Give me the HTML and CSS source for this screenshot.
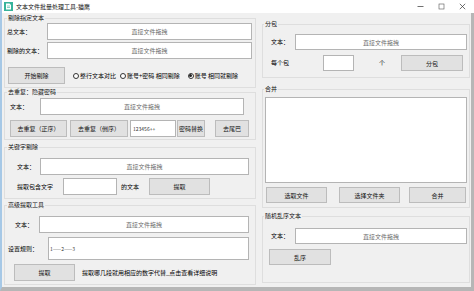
FILE: index.html
```html
<!DOCTYPE html>
<html>
<head>
<meta charset="utf-8">
<link rel="stylesheet" href="styles.css">
</head>
<body>
<div id="window">
    <div id="titlebar">
        <svg class="app-icon" width="9" height="9" viewBox="0 0 9 9">
            <rect x="0" y="0" width="9" height="9" fill="#37b39b"/>
            <path d="M2 1.5h3.5l1.5 1.5v4.5h-5z" fill="#ffffff"/>
            <path d="M3 4h3M3 5.5h3" stroke="#37b39b" stroke-width="0.6"/>
        </svg>
        <span class="title">文本文件批量处理工具-猫鹰</span>
        <div class="controls">
            <span><svg width="7" height="7" viewBox="0 0 7 7"><path d="M0.5 3.5h6" stroke="#333" stroke-width="0.7"/></svg></span>
            <span><svg width="7" height="7" viewBox="0 0 7 7"><rect x="1" y="1" width="5" height="5" fill="none" stroke="#555" stroke-width="0.6"/></svg></span>
            <span><svg width="7" height="7" viewBox="0 0 7 7"><path d="M0.8 0.8l5.4 5.4M6.2 0.8l-5.4 5.4" stroke="#333" stroke-width="0.7"/></svg></span>
        </div>
    </div>

    <div id="client">
        <div class="left-col">
            <!-- 剔除指定文本 -->
            <fieldset class="group g-remove">
                <legend>剔除指定文本</legend>
                <div class="gbody">
                    <div class="row">
                        <label class="lbl w40">总文本：</label>
                        <input class="tb grow" type="text" placeholder="直接文件拖拽">
                    </div>
                    <div class="row mt2">
                        <label class="lbl w40">剔除的文本：</label>
                        <input class="tb grow" type="text" placeholder="直接文件拖拽">
                    </div>
                    <div class="row mt8">
                        <button class="btn b-start">开始剔除</button>
                        <label class="radio r1"><input type="radio" name="mode">整行文本对比</label>
                        <label class="radio r2"><input type="radio" name="mode">账号+密码 相同剔除</label>
                        <label class="radio r3"><input type="radio" name="mode" checked>账号 相同就剔除</label>
                    </div>
                </div>
            </fieldset>

            <!-- 去重复 -->
            <fieldset class="group g-dedupe">
                <legend>去重复：隐藏密码</legend>
                <div class="gbody">
                    <div class="row">
                        <label class="lbl w30">文本：</label>
                        <input class="tb w204" type="text" placeholder="直接文件拖拽">
                    </div>
                    <div class="row mt5">
                        <button class="btn b-asc">去重复（正序）</button>
                        <button class="btn b-desc">去重复（倒序）</button>
                        <input class="tb pwd" type="text" value="123456++">
                        <button class="btn b-replace">密码替换</button>
                        <button class="btn b-tail">去尾巴</button>
                    </div>
                </div>
            </fieldset>

            <!-- 关键字剔除 -->
            <fieldset class="group g-keyword">
                <legend>关键字剔除</legend>
                <div class="gbody">
                    <div class="row">
                        <label class="lbl w23">文本：</label>
                        <input class="tb w209" type="text" placeholder="直接文件拖拽">
                    </div>
                    <div class="row mt3">
                        <label class="lbl w46">提取包含文字</label>
                        <input class="tb kw" type="text">
                        <label class="lbl after-kw">的文本</label>
                        <button class="btn b-extract">提取</button>
                    </div>
                </div>
            </fieldset>

            <!-- 高级提取工具 -->
            <fieldset class="group g-advanced">
                <legend>高级提取工具</legend>
                <div class="gbody">
                    <div class="row">
                        <label class="lbl adv-lbl">文本：</label>
                        <input class="tb w210" type="text" placeholder="直接文件拖拽">
                    </div>
                    <div class="row rule-row mt4">
                        <label class="lbl w40">设置规则：</label>
                        <div class="tb rules">1——2——3</div>
                    </div>
                    <div class="row mt4">
                        <button class="btn b-adv">提取</button>
                        <span class="hint">提取哪几段就用相应的数字代替_点击查看详细说明</span>
                    </div>
                </div>
            </fieldset>
        </div>

        <div class="right-col">
            <!-- 分包 -->
            <fieldset class="group g-split">
                <legend>分包</legend>
                <div class="gbody">
                    <div class="row r16">
                        <label class="lbl w24">文本：</label>
                        <input class="tb grow" type="text" placeholder="直接文件拖拽">
                    </div>
                    <div class="row r16 mt5">
                        <label class="lbl w52">每个包</label>
                        <input class="tb count" type="text">
                        <label class="lbl unit">个</label>
                        <button class="btn b-split">分包</button>
                    </div>
                </div>
            </fieldset>

            <!-- 合并 -->
            <fieldset class="group g-merge">
                <legend>合并</legend>
                <div class="gbody">
                    <div class="listbox"></div>
                    <div class="row r16 mt4">
                        <button class="btn b-pick">选取文件</button>
                        <button class="btn b-folder">选择文件夹</button>
                        <button class="btn b-merge">合并</button>
                    </div>
                </div>
            </fieldset>

            <!-- 随机乱序文本 -->
            <fieldset class="group g-shuffle">
                <legend>随机乱序文本</legend>
                <div class="gbody">
                    <div class="row r16">
                        <label class="lbl w24">文本：</label>
                        <input class="tb grow" type="text" placeholder="直接文件拖拽">
                    </div>
                    <div class="row r16 mt5">
                        <button class="btn b-shuffle">乱序</button>
                    </div>
                </div>
            </fieldset>
        </div>
    </div>
</div>
</body>
</html>
```

FILE: styles.css
```css
*{
    box-sizing: border-box;
}

body{
    margin: 0;
    font-family: "Noto Sans CJK SC", "Noto Sans", sans-serif;
    font-size: 6px;
    color: #000;
    background-color: #f0f0f0;
}

#window{
    width: 474px;
    height: 291px;
    display: flex;
    flex-direction: column;
    border-left: 2px solid #a6c8e6;
    border-bottom: 4px solid #b6b6b6;
    background-color: #f0f0f0;
}

#titlebar{
    height: 13px;
    flex: none;
    display: flex;
    align-items: center;
    background-color: #ffffff;
}

.app-icon{
    margin-left: 2px;
    flex: none;
}

.title{
    margin-left: 3px;
    line-height: 8px;
    color: #111;
}

.controls{
    margin-left: auto;
    margin-right: 1px;
    display: flex;
}

.controls span{
    width: 21px;
    height: 13px;
    display: flex;
    justify-content: center;
    align-items: center;
}

#client{
    flex: 1;
    display: flex;
    gap: 6px;
    padding: 1px 0 0 2px;
    border-right: 3px solid #b6b6b6;
}

.left-col{
    width: 252px;
    display: flex;
    flex-direction: column;
}

.right-col{
    width: 208px;
    display: flex;
    flex-direction: column;
}

/* group box */
.group{
    margin: 0;
    padding: 0;
    min-width: 0;
    border: 1px solid #dedede;
}

.group legend{
    padding: 0 1px;
    margin-left: 2px;
    height: 8px;
    line-height: 8px;
    font-size: 6px;
    color: #111;
}

.right-col .group legend{
    margin-left: 1px;
}

.row{
    height: 17px;
    display: flex;
    align-items: center;
}

.r16{
    height: 16px;
}

.mt2{ margin-top: 2px; }
.mt3{ margin-top: 3px; }
.mt4{ margin-top: 4px; }
.mt5{ margin-top: 5px; }
.mt8{ margin-top: 8px; }

.lbl{
    flex: none;
    white-space: nowrap;
    line-height: 8px;
}

.w23{ width: 23px; }
.w24{ width: 24px; }
.w30{ width: 30px; }
.w40{ width: 40px; }
.w46{ width: 46px; }
.w52{ width: 52px; }

/* text boxes */
.tb{
    height: 100%;
    margin: 0;
    padding: 0 1px;
    border: 1px solid #b4b4b4;
    background-color: #ffffff;
    font-family: inherit;
    font-size: 6px;
    color: #333;
    text-align: center;
    outline: none;
}

.tb::placeholder{
    color: #6a6a6a;
}

.grow{ flex: 1; min-width: 0; }
.w204{ width: 204px; }
.w209{ width: 209px; }
.w210{ width: 210px; }

/* buttons */
.btn{
    height: 100%;
    margin: 0;
    padding: 0;
    flex: none;
    border: 1px solid #bcbcbc;
    background-color: #e1e1e1;
    font-family: inherit;
    font-size: 6px;
    color: #111;
}

/* radios */
.radio{
    display: flex;
    align-items: center;
    white-space: nowrap;
    line-height: 8px;
}

.radio input{
    appearance: none;
    margin: 0 1px 0 0;
    width: 6px;
    height: 6px;
    border: 0.7px solid #333;
    border-radius: 50%;
    background-color: #ffffff;
    display: grid;
    place-content: center;
}

.radio input:checked::before{
    content: "";
    width: 3px;
    height: 3px;
    border-radius: 50%;
    background-color: #222;
}

/* group 1 */
.g-remove .gbody{
    padding: 1px 3px 3px 2px;
}

.b-start{ width: 57px; margin-left: 1px; }
.r1{ margin-left: 8px; }
.r2{ margin-left: 4px; }
.r3{ margin-left: 8px; }

/* group 2 */
.g-dedupe .gbody{
    padding: 2px 3px 2px 5px;
}

.b-asc{ width: 57px; }
.b-desc{ width: 58px; margin-left: 3px; }
.pwd{
    width: 46px;
    margin-left: 2px;
    text-align: left;
    padding-left: 2px;
    font-size: 5px;
}
.b-replace{ width: 28px; margin-left: 1px; }
.b-tail{ width: 34px; margin-left: 10px; }

/* group 3 */
.g-keyword{
    margin-top: 3px;
}

.g-keyword .gbody{
    padding: 7px 3px 3px 12px;
}

.kw{ width: 54px; }
.after-kw{ margin-left: 4px; width: 18px; }
.b-extract{ width: 61px; margin-left: 10px; }

/* group 4 */
.g-advanced{
    margin-top: 2px;
}

.g-advanced .gbody{
    padding: 7px 3px 3px 3px;
}

.adv-lbl{
    margin-left: 7px;
    width: 24px;
}

.rule-row{
    height: 23px;
}

.rules{
    width: 201px;
    display: flex;
    align-items: center;
    text-align: left;
    font-size: 5px;
    color: #333;
}

.b-adv{ width: 61px; margin-left: 6px; }

.hint{
    margin-left: 7px;
    white-space: nowrap;
    line-height: 8px;
}

/* right column groups */
.g-split{
    margin-top: 6px;
}

.g-split .gbody{
    padding: 6px 2px 6px 8px;
}

.count{ width: 31px; }
.unit{ margin-left: 25px; }
.b-split{ width: 62px; margin-left: 16px; }

.g-merge{
    margin-top: 7px;
}

.g-merge .gbody{
    padding: 4px 2px 4px 2px;
}

.listbox{
    height: 86px;
    border: 1px solid #b4b4b4;
    background-color: #ffffff;
}

.b-pick{ width: 61px; margin-left: 1px; }
.b-folder{ width: 61px; margin-left: 12px; }
.b-merge{ width: 57px; margin-left: 9px; }

.g-shuffle{
    margin-top: 4px;
}

.g-shuffle .gbody{
    padding: 8px 2px 17px 8px;
}

.b-shuffle{ width: 62px; margin-left: -2px; }
```
